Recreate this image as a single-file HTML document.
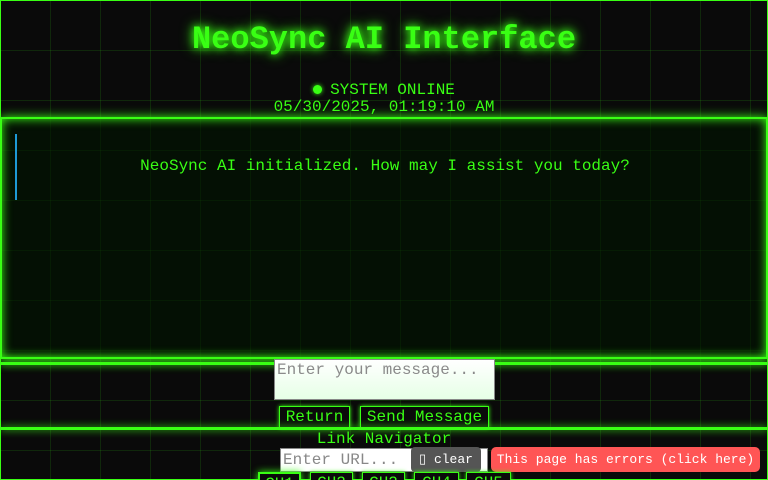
<!DOCTYPE html>
<html><head><style>
*{box-sizing:border-box;margin:0;padding:0}
html,body{width:768px;height:480px;overflow:hidden}
body{background-color:#0a0a0a;background-image:linear-gradient(rgba(57,255,20,.12) 1px,transparent 1px),linear-gradient(90deg,rgba(57,255,20,.12) 1px,transparent 1px);background-size:50px 50px;background-position:0 0;font-family:"Liberation Mono",monospace;color:#39ff14;position:relative}
.frame{position:absolute;left:0;top:0;width:768px;height:480px;border:1px solid #39ff14;pointer-events:none}
.a{position:absolute}
h1{position:absolute;left:0;right:0;top:21px;text-align:center;font-size:32px;font-weight:bold;text-shadow:0 0 8px #39ff14,0 0 14px #39ff14}
.st{left:0;right:0;text-align:center;font-size:16px}
.chat{left:0;right:0;top:117px;height:242px;border:2px solid #39ff14;background:rgba(0,20,0,.6);box-shadow:0 0 10px #39ff14,inset 0 0 10px #39ff14}
.line{left:0;right:0;height:3px;background:#39ff14;box-shadow:0 0 8px #39ff14}
.btn{border:1px solid #39ff14;background:#0a0a0a;font-size:16px;height:22px;line-height:20px;text-align:center;box-shadow:0 0 4px #39ff14}
</style></head><body>
<div class="frame"></div>
<h1>NeoSync AI Interface</h1>
<div class="a st" style="top:81px"><span style="display:inline-block;width:9px;height:9px;border-radius:50%;background:#39ff14;margin-right:8px;box-shadow:0 0 5px #39ff14"></span>SYSTEM ONLINE</div>
<div class="a st" style="top:98px">05/30/2025, 01:19:10 AM</div>
<div class="a chat"></div>
<div class="a" style="left:15px;top:134px;width:2px;height:66px;background:#1e9ad6"></div>
<div class="a st" style="top:157px;left:2px">NeoSync AI initialized. How may I assist you today?</div>
<div class="a line" style="top:362px;height:3px"></div>
<div class="a" style="left:274px;top:359px;width:221px;height:41px;background:linear-gradient(#fff,#e6ffe6);border:1px solid #888;color:#8a8a8a;font-size:16px;padding:0 2px;line-height:20px">Enter your message...</div>
<div class="a btn" style="left:279px;top:406px;width:71px">Return</div>
<div class="a btn" style="left:360px;top:406px;width:129px">Send Message</div>
<div class="a line" style="top:427px"></div>
<div class="a st" style="top:430px">Link Navigator</div>
<div class="a" style="left:280px;top:448px;width:208px;height:24px;background:#fff;border:1px solid #888;color:#888;font-size:16px;line-height:22px;padding-left:2px">Enter URL...</div>
<div class="a" style="left:411px;top:447px;width:70px;height:25px;background:#555;border-radius:4px;color:#fff;font-size:13px;line-height:25px;padding-left:8px">▯ clear</div>
<div class="a" style="left:491px;top:447px;width:269px;height:25px;background:#f55;border-radius:5px;color:#fff;font-size:13px;line-height:25px;text-align:center">This page has errors (click here)</div>
<div class="a btn" style="left:258px;top:472px;width:43px;border-width:2px;box-shadow:0 0 8px #39ff14">CH1</div>
<div class="a btn" style="left:310px;top:472px;width:43px">CH2</div>
<div class="a btn" style="left:362px;top:472px;width:43px">CH3</div>
<div class="a btn" style="left:414px;top:472px;width:45px">CH4</div>
<div class="a btn" style="left:466px;top:472px;width:45px">CH5</div>
</body></html>
